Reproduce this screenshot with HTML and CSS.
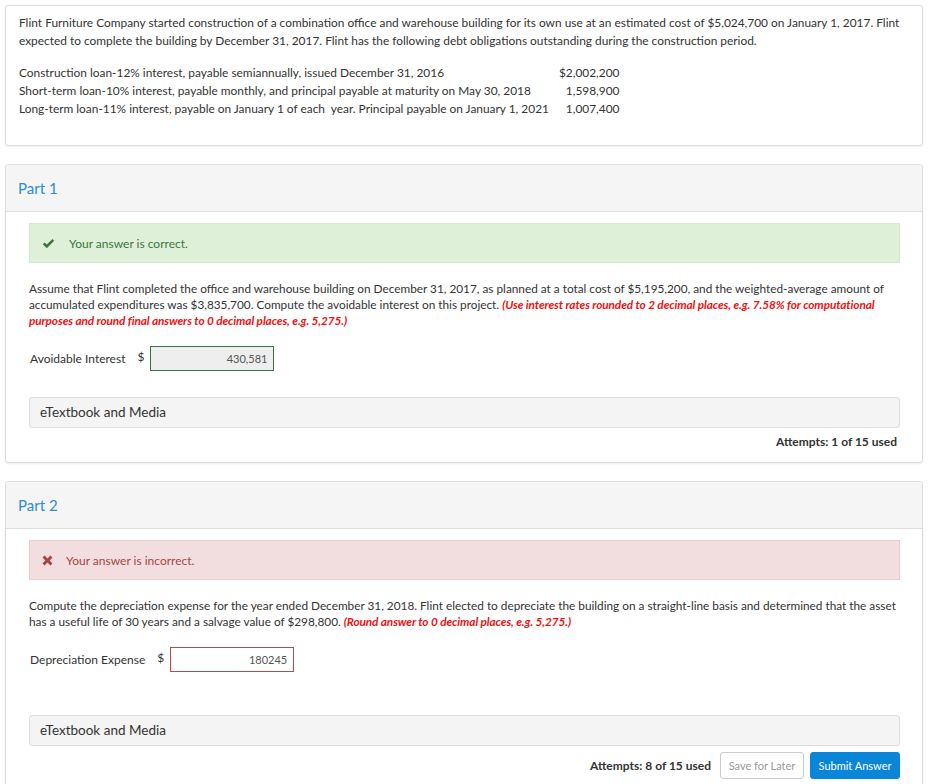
FILE: index.html
```html
<!DOCTYPE html>
<html lang="en">
<head>
    <meta charset="UTF-8">
    <title>Flint Furniture Company</title>
    <link rel="stylesheet" href="styles.css">
</head>
<body>
<div class="card intro">
    <p>Flint Furniture Company started construction of a combination office and warehouse building for its own use at an estimated cost of $5,024,700 on January 1, 2017. Flint expected to complete the building by December 31, 2017. Flint has the following debt obligations outstanding during the construction period.</p>
    <table class="debts">
        <tr><td>Construction loan-12% interest, payable semiannually, issued December 31, 2016</td><td class="amt">$2,002,200</td></tr>
        <tr><td>Short-term loan-10% interest, payable monthly, and principal payable at maturity on May 30, 2018</td><td class="amt">1,598,900</td></tr>
        <tr><td>Long-term loan-11% interest, payable on January 1 of each &nbsp;year. Principal payable on January 1, 2021</td><td class="amt">1,007,400</td></tr>
    </table>
</div>

<div class="card part">
    <div class="part-head">Part 1</div>
    <div class="part-body">
        <div class="alert correct">
            <svg width="13" height="11" viewBox="0 0 13 11"><path d="M0.8 6.2 L2.6 4.4 L4.8 6.6 L10.4 1 L12.2 2.8 L4.8 10.2 Z" fill="#3c763d"/></svg>
            <span>Your answer is correct.</span>
        </div>
        <p class="question">Assume that Flint completed the office and warehouse building on December 31, 2017, as planned at a total cost of $5,195,200, and the weighted-average amount of accumulated expenditures was $3,835,700. Compute the avoidable interest on this project. <em class="hint">(Use interest rates rounded to 2 decimal places, e.g. 7.58% for computational purposes and round final answers to 0 decimal places, e.g. 5,275.)</em></p>
        <div class="answer">
            <span class="label">Avoidable Interest</span>
            <span class="dollar">$</span>
            <input class="field ok" type="text" value="430,581" readonly>
        </div>
        <div class="media">eTextbook and Media</div>
        <div class="footer">
            <span class="attempts">Attempts: 1 of 15 used</span>
        </div>
    </div>
</div>

<div class="card part">
    <div class="part-head">Part 2</div>
    <div class="part-body">
        <div class="alert wrong">
            <svg width="11" height="11" viewBox="0 0 11 11"><path d="M0.5 2.6 L2.6 0.5 L5.5 3.4 L8.4 0.5 L10.5 2.6 L7.6 5.5 L10.5 8.4 L8.4 10.5 L5.5 7.6 L2.6 10.5 L0.5 8.4 L3.4 5.5 Z" fill="#a94442"/></svg>
            <span>Your answer is incorrect.</span>
        </div>
        <p class="question">Compute the depreciation expense for the year ended December 31, 2018. Flint elected to depreciate the building on a straight-line basis and determined that the asset has a useful life of 30 years and a salvage value of $298,800. <em class="hint">(Round answer to 0 decimal places, e.g. 5,275.)</em></p>
        <div class="answer">
            <span class="label">Depreciation Expense</span>
            <span class="dollar">$</span>
            <input class="field bad" type="text" value="180245">
        </div>
        <div class="media late">eTextbook and Media</div>
        <div class="footer">
            <span class="attempts">Attempts: 8 of 15 used</span>
            <button class="btn save">Save for Later</button>
            <button class="btn submit">Submit Answer</button>
        </div>
    </div>
</div>
</body>
</html>
```

FILE: styles.css
```css
body { margin:0; padding:5px 6px 0 5px; font-family: Lato, "Open Sans", Arial, sans-serif; font-size:12px; color:#333; background:#fff; }
p { margin:0; }
.card { border:1px solid #ddd; border-radius:3px; box-shadow:0 1px 2px rgba(0,0,0,0.08); margin-bottom:18px; }
.intro { padding:8px 13px 27px; line-height:18px; font-size:11.9px; }
.debts { border-collapse:collapse; margin-top:14px; }
.debts td { padding:0 10px 0 0; line-height:18px; }
.debts .amt { text-align:right; padding-right:0; }
.part-head { background:#f5f5f5; border-bottom:1px solid #ddd; height:46px; line-height:46px; padding-left:12px; font-size:15px; color:#2a8dd6; }
.part-body { padding:11px 22px 12px 23px; }
.alert { display:flex; align-items:center; gap:14px; height:38px; padding-left:12px; border:1px solid; font-size:12px; }
.alert.correct { background:#dff0d8; border-color:#d6e9c6; color:#3c763d; }
.alert.wrong { background:#f2dede; border-color:#ebccd1; color:#a94442; gap:13px; }
.question { margin-top:18px; line-height:16px; font-size:11.8px; }
.hint { color:#ee1111; font-weight:bold; letter-spacing:-0.1px; }
.answer { display:flex; align-items:center; margin-top:17px; }
.label { margin-left:1px; }
.dollar { margin:0 6px 0 12px; position:relative; top:-2px; }
.field { width:124px; height:25px; box-sizing:border-box; border:1px solid; border-radius:0; padding:0 6px; text-align:right; font-family:inherit; font-size:11px; color:#555; }
.field.ok { background:#eee; border-color:#3c763d; }
.field.bad { background:#fff; border-color:#b94a48; }
.media { margin-top:26px; height:31px; box-sizing:border-box; line-height:29px; padding-left:10px; background:#f4f4f4; border:1px solid #ddd; border-radius:3px; font-size:13.5px; color:#333; }
.media.late { margin-top:43px; }
.footer { display:flex; justify-content:flex-end; align-items:center; gap:6px; margin-top:6px; }
.attempts { font-weight:bold; line-height:16px; margin-right:3px; }
.btn { height:27px; border:1px solid #ccc; border-radius:3px; font-family:inherit; font-size:11px; padding:0; white-space:nowrap; cursor:pointer; }
.btn.save { background:#fff; color:#999; width:84px; }
.btn.submit { background:#0a86d8; border-color:#0a86d8; color:#fff; width:90px; }
```
